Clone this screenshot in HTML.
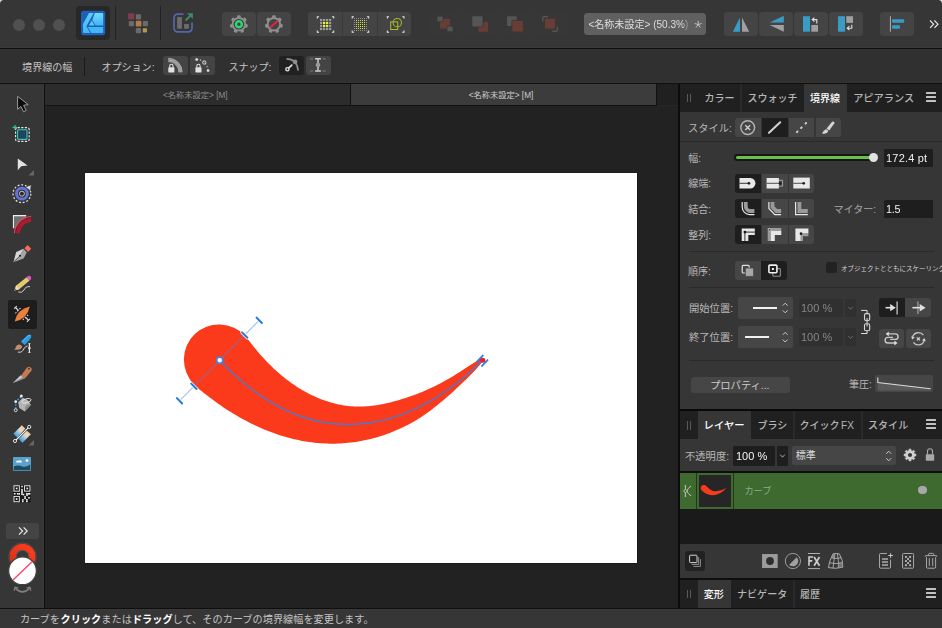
<!DOCTYPE html>
<html lang="ja"><head><meta charset="utf-8"><title>Affinity Designer</title><style>
html,body{margin:0;padding:0;background:#222;}
body{width:942px;height:628px;position:relative;overflow:hidden;font-family:"Liberation Sans",sans-serif;}
div,svg,span{position:absolute;display:block;}
svg{overflow:hidden;}
svg.t{overflow:visible;}
svg.t text{font-family:"Liberation Sans","Noto Sans CJK JP",sans-serif;white-space:pre;}
span.l{line-height:1;white-space:nowrap;will-change:transform;}
</style></head><body>
<main id="canvas" aria-label="Document canvas">
<div style="left:45px;top:106px;width:633px;height:502px;background:#222222;"></div>
<div style="left:84.9px;top:172.8px;width:552.3px;height:390.2px;background:#ffffff;box-shadow:0.2px 0.2px 0 0.55px #171717;"></div>
<svg style="left:85px;top:173px" width="552" height="390" viewBox="85 173 552 390"><title>Curve</title><path d="M245.54,335.96L247.17,338.19L248.8,340.38L250.44,342.54L252.09,344.65L253.73,346.73L255.39,348.76L257.05,350.76L258.71,352.72L260.38,354.64L262.06,356.52L263.74,358.36L265.42,360.17L267.11,361.94L268.8,363.67L270.5,365.36L272.2,367.02L273.9,368.64L275.61,370.23L277.33,371.78L279.04,373.29L280.77,374.76L282.49,376.21L284.22,377.61L285.96,378.98L287.7,380.32L289.44,381.62L291.19,382.89L292.95,384.12L294.71,385.33L296.47,386.49L298.24,387.63L300.01,388.73L301.79,389.79L303.57,390.83L305.36,391.83L307.15,392.8L308.95,393.74L310.75,394.64L312.56,395.51L314.38,396.36L316.2,397.17L318.03,397.94L319.86,398.69L321.7,399.41L323.55,400.09L325.4,400.74L327.26,401.37L329.13,401.96L331.01,402.52L332.89,403.05L334.78,403.55L336.68,404.01L338.58,404.45L340.5,404.84L342.42,405.19L344.35,405.5L346.29,405.77L348.23,405.99L350.18,406.18L352.14,406.33L354.1,406.43L356.07,406.5L358.05,406.54L360.03,406.53L362.01,406.49L364,406.41L366,406.3L367.99,406.15L370,405.97L372.01,405.75L374.02,405.5L376.04,405.22L378.06,404.91L380.09,404.56L382.12,404.19L384.16,403.78L386.2,403.34L388.25,402.88L390.31,402.38L392.37,401.86L394.44,401.31L396.51,400.74L398.59,400.13L400.68,399.51L402.78,398.85L404.88,398.17L407,397.47L409.12,396.75L411.26,396L413.4,395.23L415.56,394.44L417.73,393.63L419.91,392.79L422.09,391.91L424.27,391L426.47,390.06L428.66,389.08L430.87,388.07L433.07,387.03L435.28,385.95L437.5,384.84L439.71,383.7L441.94,382.52L444.16,381.31L446.39,380.07L448.62,378.79L450.86,377.49L453.09,376.15L455.33,374.77L457.57,373.37L459.82,371.93L462.06,370.45L464.31,368.95L466.57,367.42L468.87,365.92L471.23,364.43L473.61,362.93L475.98,361.39L478.33,359.78L480.63,358.09L483.22,360.73L481.4,362.96L479.57,365.17L477.72,367.35L475.86,369.49L473.95,371.57L472,373.59L470.03,375.57L468.05,377.51L466.06,379.43L464.06,381.32L462.07,383.2L460.08,385.08L458.11,386.96L456.15,388.83L454.18,390.68L452.19,392.49L450.2,394.28L448.19,396.05L446.17,397.78L444.14,399.48L442.1,401.17L440.07,402.84L438.03,404.5L435.99,406.15L433.94,407.78L431.88,409.38L429.8,410.96L427.72,412.51L425.62,414.03L423.5,415.51L421.36,416.95L419.2,418.35L417.03,419.7L414.83,421.01L412.61,422.26L410.38,423.48L408.13,424.66L405.88,425.82L403.61,426.94L401.33,428.02L399.03,429.08L396.73,430.1L394.41,431.08L392.08,432.03L389.74,432.95L387.38,433.83L385.02,434.67L382.64,435.48L380.25,436.25L377.85,436.99L375.43,437.69L373.01,438.35L370.57,438.98L368.12,439.56L365.66,440.11L363.19,440.62L360.71,441.1L358.22,441.53L355.71,441.92L353.2,442.28L350.68,442.59L348.14,442.87L345.6,443.1L343.05,443.3L340.49,443.45L337.92,443.56L335.34,443.63L332.75,443.66L330.16,443.64L327.55,443.58L324.94,443.49L322.32,443.34L319.7,443.16L317.07,442.93L314.43,442.66L311.79,442.34L309.14,441.99L306.49,441.58L303.83,441.14L301.17,440.65L298.5,440.11L295.83,439.54L293.15,438.91L290.47,438.25L287.79,437.54L285.11,436.78L282.42,435.98L279.73,435.14L277.04,434.25L274.35,433.32L271.66,432.34L268.97,431.32L266.27,430.25L263.57,429.14L260.88,427.98L258.18,426.78L255.49,425.54L252.79,424.25L250.1,422.91L247.4,421.53L244.71,420.11L242.01,418.64L239.32,417.13L236.63,415.58L233.94,413.98L231.26,412.33L228.57,410.64L225.89,408.91L223.2,407.13L220.52,405.31L217.85,403.44L215.17,401.53L212.5,399.57L209.83,397.57L207.16,395.53L204.5,393.44L201.83,391.31L199.17,389.13L196.52,386.91L193.86,384.64A36.6,35.5 47 0 1 245.54,335.96Z" fill="#fb391b"/><path d="M219.7,360.3C305.27,451.13 401.03,440.55 482.8,360.3" fill="none" stroke="#4a7ad0" stroke-width="1.3"/><path d="M179.5,400.8L259.2,320.3" stroke="#4f88e4" stroke-width="1.2" opacity="0.5"/><path d="M182.16,403.44L176.84,398.16" stroke="#ffffff" stroke-width="3.6" stroke-linecap="round" opacity="0.85"/><path d="M182.16,403.44L176.84,398.16" stroke="#1f78e4" stroke-width="2.0" stroke-linecap="round"/><path d="M196.56,388.94L191.24,383.66" stroke="#ffffff" stroke-width="3.6" stroke-linecap="round" opacity="0.85"/><path d="M196.56,388.94L191.24,383.66" stroke="#1f78e4" stroke-width="2.0" stroke-linecap="round"/><path d="M247.36,337.64L242.04,332.36" stroke="#ffffff" stroke-width="3.6" stroke-linecap="round" opacity="0.85"/><path d="M247.36,337.64L242.04,332.36" stroke="#1f78e4" stroke-width="2.0" stroke-linecap="round"/><path d="M261.86,322.94L256.54,317.66" stroke="#ffffff" stroke-width="3.6" stroke-linecap="round" opacity="0.85"/><path d="M261.86,322.94L256.54,317.66" stroke="#1f78e4" stroke-width="2.0" stroke-linecap="round"/><circle cx="219.7" cy="360.3" r="3.1" fill="#ffffff" stroke="#4a80dc" stroke-width="1.7"/><path d="M477.25,361.34L482.77,355.58" stroke="#2a84e8" stroke-width="1.9" stroke-linecap="round"/><path d="M482,365.89L487.52,360.13" stroke="#2a84e8" stroke-width="1.9" stroke-linecap="round"/><circle cx="482.8" cy="360.3" r="2.5" fill="#ee1c2e"/></svg>
</main>
<header id="toolbar" aria-label="Main toolbar">
<div style="left:0px;top:0px;width:942px;height:48px;background:#363636;"></div>
<div style="left:0px;top:47px;width:942px;height:1px;background:#3b3b3b;"></div>
<div style="left:0px;top:48px;width:942px;height:1px;background:#0e0e0e;"></div>
<div style="left:0px;top:49px;width:942px;height:34px;background:#303030;"></div>
<div style="left:0px;top:82px;width:942px;height:1px;background:#343434;"></div>
<div style="left:0px;top:83px;width:942px;height:1px;background:#0e0e0e;"></div>
<svg style="left:0px;top:0px" width="6" height="6" viewBox="0 0 6 6"><path d="M0,0H3.2A4.2,4.2 0 0 0 0,4.2Z" fill="#dcdcdc"/></svg>
<svg style="left:936px;top:0px" width="6" height="6" viewBox="936 0 6 6"><path d="M942,0H938.8A4.2,4.2 0 0 1 942,4.2Z" fill="#dcdcdc"/></svg>
<div style="left:13px;top:18.5px;width:12px;height:12px;background:#505050;border-radius:6px;"></div>
<div style="left:33px;top:18.5px;width:12px;height:12px;background:#505050;border-radius:6px;"></div>
<div style="left:53px;top:18.5px;width:12px;height:12px;background:#505050;border-radius:6px;"></div>
<div style="left:76px;top:6px;width:34px;height:34px;background:#282828;border-radius:4px;"></div>
<svg style="left:81px;top:10px" width="25" height="26" viewBox="81 10 25 26"><title>Designer Persona</title><defs><linearGradient id="afg" x1="0" y1="0" x2="0" y2="1"><stop offset="0" stop-color="#72dcff"/><stop offset="1" stop-color="#3fb2f4"/></linearGradient><linearGradient id="afh" x1="0" y1="0" x2="0" y2="1"><stop offset="0" stop-color="#5cccfb"/><stop offset="1" stop-color="#45b6f4"/></linearGradient></defs><rect x="81" y="10.7" width="24.2" height="24.5" rx="2.8" fill="#1d60b6"/><path d="M89.05,13H93.7L86.4,26.2L90.2,33.1H84A1,1 0 0 1 83,32.1V23.9Z" fill="url(#afh)"/><path d="M91.7,20.6L94.6,25.6H88.85Z" fill="#5ac8fa"/><path d="M94.75,13H102.2A1,1 0 0 1 103.2,14V25.6H95.55L92.25,19.9Z" fill="url(#afg)"/><path d="M88.25,26.9H103.2V32.1A1,1 0 0 1 102.2,33.1H91.5L87.6,26.9Z" fill="#43b6f5"/></svg>
<div style="left:115px;top:6px;width:1px;height:34px;background:#222222;"></div>
<svg style="left:127px;top:12px" width="23" height="23" viewBox="127 12 23 23"><title>Pixel Persona</title><rect x="128" y="13.3" width="6.2" height="6.2" rx="0.9" fill="#7c3d4c"/><rect x="135.8" y="14.2" width="5.2" height="5.2" rx="0.9" fill="#6a6a6a"/><rect x="128.8" y="21" width="5.2" height="5.2" rx="0.9" fill="#6a6a6a"/><rect x="135.8" y="20.8" width="5.6" height="5.6" rx="0.9" fill="#b47a44"/><rect x="142.8" y="21" width="5.2" height="5.2" rx="0.9" fill="#6a6a6a"/><rect x="135.8" y="28" width="5.2" height="5.2" rx="0.9" fill="#6a6a6a"/><rect x="142.8" y="28.3" width="4.2" height="4.2" rx="0.9" fill="#b09a52"/></svg>
<div style="left:160px;top:6px;width:1px;height:34px;background:#222222;"></div>
<svg style="left:171px;top:11px" width="24" height="24" viewBox="171 11 24 24"><title>Export Persona</title><path d="M182.8,14.05H177.6A3.6,3.6 0 0 0 174,17.65V28.3A3.6,3.6 0 0 0 177.6,31.9H188.4A3.6,3.6 0 0 0 192,28.3V23" fill="none" stroke="#5565ae" stroke-width="1.75" stroke-linecap="round"/><rect x="177.1" y="17" width="4.8" height="11.8" rx="0.5" fill="#6c6c6c"/><rect x="184.1" y="24.1" width="4.8" height="4.7" rx="0.5" fill="#6c6c6c"/><path d="M185.5,20.5L190.6,15.5" fill="none" stroke="#3b8a70" stroke-width="1.8"/><path d="M187.1,13.2H192.9V18.9Z" fill="#3b8a70"/></svg>
<div style="left:222px;top:12px;width:34px;height:24px;background:#444444;border-radius:4px;"></div>
<div style="left:257px;top:12px;width:34px;height:24px;background:#444444;border-radius:4px;"></div>
<svg style="left:228px;top:13px" width="22" height="23" viewBox="228 13 22 23"><title>Preferences</title><rect x="237.15" y="15.2" width="3.5" height="3" rx="1" fill="#8e8e8e" transform="rotate(0 238.9 16.7)"/><rect x="243.01" y="18.02" width="3.5" height="3" rx="1" fill="#8e8e8e" transform="rotate(51.43 244.76 19.52)"/><rect x="244.46" y="24.37" width="3.5" height="3" rx="1" fill="#8e8e8e" transform="rotate(102.86 246.21 25.87)"/><rect x="240.4" y="29.46" width="3.5" height="3" rx="1" fill="#8e8e8e" transform="rotate(154.29 242.15 30.96)"/><rect x="233.9" y="29.46" width="3.5" height="3" rx="1" fill="#8e8e8e" transform="rotate(205.71 235.65 30.96)"/><rect x="229.84" y="24.37" width="3.5" height="3" rx="1" fill="#8e8e8e" transform="rotate(257.14 231.59 25.87)"/><rect x="231.29" y="18.02" width="3.5" height="3" rx="1" fill="#8e8e8e" transform="rotate(308.57 233.04 19.52)"/><circle cx="238.9" cy="24.2" r="6.3" fill="#363636" stroke="#8e8e8e" stroke-width="2"/><circle cx="238.9" cy="24.2" r="3.0" fill="#3c4a42" stroke="#2fd474" stroke-width="2.5"/></svg>
<svg style="left:263px;top:13px" width="22" height="23" viewBox="263 13 22 23"><title>Assistant</title><rect x="272.15" y="15.2" width="3.5" height="3" rx="1" fill="#8e8e8e" transform="rotate(0 273.9 16.7)"/><rect x="278.01" y="18.02" width="3.5" height="3" rx="1" fill="#8e8e8e" transform="rotate(51.43 279.76 19.52)"/><rect x="279.46" y="24.37" width="3.5" height="3" rx="1" fill="#8e8e8e" transform="rotate(102.86 281.21 25.87)"/><rect x="275.4" y="29.46" width="3.5" height="3" rx="1" fill="#8e8e8e" transform="rotate(154.29 277.15 30.96)"/><rect x="268.9" y="29.46" width="3.5" height="3" rx="1" fill="#8e8e8e" transform="rotate(205.71 270.65 30.96)"/><rect x="264.84" y="24.37" width="3.5" height="3" rx="1" fill="#8e8e8e" transform="rotate(257.14 266.59 25.87)"/><rect x="266.29" y="18.02" width="3.5" height="3" rx="1" fill="#8e8e8e" transform="rotate(308.57 268.04 19.52)"/><circle cx="273.9" cy="24.2" r="6.3" fill="#444444" stroke="#8e8e8e" stroke-width="2"/><path d="M270.9,27L276.9,21.4" stroke="#e6203c" stroke-width="2.1" stroke-linecap="round"/></svg>
<div style="left:308px;top:12px;width:103px;height:24px;background:#444444;border-radius:4px;"></div>
<div style="left:342px;top:12px;width:1px;height:24px;background:#3a3a3a;"></div>
<div style="left:377px;top:12px;width:1px;height:24px;background:#3a3a3a;"></div>
<svg style="left:315px;top:14px" width="22" height="22" viewBox="315 14 22 22"><title>Snapping</title><path d="M317.3,18.55V16.8H319.05M331.95,16.8H333.7V18.55M333.7,30.450000000000003V32.2H331.95M319.05,32.2H317.3V30.450000000000003" fill="none" stroke="#e6e6e6" stroke-width="1.05"/><rect x="320" y="18.9" width="2.2" height="2.2" fill="#9a9a9a"/><rect x="320" y="21.9" width="2.2" height="2.2" fill="#9a9a9a"/><rect x="320" y="24.9" width="2.2" height="2.2" fill="#9a9a9a"/><rect x="320" y="27.9" width="2.2" height="2.2" fill="#9a9a9a"/><rect x="323" y="18.9" width="2.2" height="2.2" fill="#9a9a9a"/><rect x="323" y="21.9" width="2.2" height="2.2" fill="#e9f03c"/><rect x="323" y="24.9" width="2.2" height="2.2" fill="#e9f03c"/><rect x="323" y="27.9" width="2.2" height="2.2" fill="#9a9a9a"/><rect x="326" y="18.9" width="2.2" height="2.2" fill="#9a9a9a"/><rect x="326" y="21.9" width="2.2" height="2.2" fill="#e9f03c"/><rect x="326" y="24.9" width="2.2" height="2.2" fill="#e9f03c"/><rect x="326" y="27.9" width="2.2" height="2.2" fill="#9a9a9a"/><rect x="329" y="18.9" width="2.2" height="2.2" fill="#9a9a9a"/><rect x="329" y="21.9" width="2.2" height="2.2" fill="#9a9a9a"/><rect x="329" y="24.9" width="2.2" height="2.2" fill="#9a9a9a"/><rect x="329" y="27.9" width="2.2" height="2.2" fill="#9a9a9a"/></svg>
<svg style="left:350px;top:14px" width="22" height="22" viewBox="350 14 22 22"><title>Grid</title><path d="M352.2,18.45V16.7H353.95M366.95,16.7H368.7V18.45M368.7,30.549999999999997V32.3H366.95M353.95,32.3H352.2V30.549999999999997" fill="none" stroke="#e6e6e6" stroke-width="1.05"/><rect x="354" y="18" width="1" height="1" fill="#8e8e8e"/><rect x="354" y="20" width="1" height="1" fill="#8e8e8e"/><rect x="354" y="22" width="1" height="1" fill="#8e8e8e"/><rect x="354" y="24" width="1" height="1" fill="#8e8e8e"/><rect x="354" y="26" width="1" height="1" fill="#8e8e8e"/><rect x="354" y="28" width="1" height="1" fill="#8e8e8e"/><rect x="354" y="30" width="1" height="1" fill="#8e8e8e"/><rect x="356" y="18" width="1" height="1" fill="#8e8e8e"/><rect x="356" y="20" width="1" height="1" fill="#d0e038"/><rect x="356" y="22" width="1" height="1" fill="#d0e038"/><rect x="356" y="24" width="1" height="1" fill="#d0e038"/><rect x="356" y="26" width="1" height="1" fill="#d0e038"/><rect x="356" y="28" width="1" height="1" fill="#d0e038"/><rect x="356" y="30" width="1" height="1" fill="#8e8e8e"/><rect x="358" y="18" width="1" height="1" fill="#8e8e8e"/><rect x="358" y="20" width="1" height="1" fill="#d0e038"/><rect x="358" y="22" width="1" height="1" fill="#d0e038"/><rect x="358" y="24" width="1" height="1" fill="#d0e038"/><rect x="358" y="26" width="1" height="1" fill="#d0e038"/><rect x="358" y="28" width="1" height="1" fill="#d0e038"/><rect x="358" y="30" width="1" height="1" fill="#8e8e8e"/><rect x="360" y="18" width="1" height="1" fill="#8e8e8e"/><rect x="360" y="20" width="1" height="1" fill="#d0e038"/><rect x="360" y="22" width="1" height="1" fill="#d0e038"/><rect x="360" y="24" width="1" height="1" fill="#d0e038"/><rect x="360" y="26" width="1" height="1" fill="#d0e038"/><rect x="360" y="28" width="1" height="1" fill="#d0e038"/><rect x="360" y="30" width="1" height="1" fill="#8e8e8e"/><rect x="362" y="18" width="1" height="1" fill="#8e8e8e"/><rect x="362" y="20" width="1" height="1" fill="#d0e038"/><rect x="362" y="22" width="1" height="1" fill="#d0e038"/><rect x="362" y="24" width="1" height="1" fill="#d0e038"/><rect x="362" y="26" width="1" height="1" fill="#d0e038"/><rect x="362" y="28" width="1" height="1" fill="#d0e038"/><rect x="362" y="30" width="1" height="1" fill="#8e8e8e"/><rect x="364" y="18" width="1" height="1" fill="#8e8e8e"/><rect x="364" y="20" width="1" height="1" fill="#d0e038"/><rect x="364" y="22" width="1" height="1" fill="#d0e038"/><rect x="364" y="24" width="1" height="1" fill="#d0e038"/><rect x="364" y="26" width="1" height="1" fill="#d0e038"/><rect x="364" y="28" width="1" height="1" fill="#d0e038"/><rect x="364" y="30" width="1" height="1" fill="#8e8e8e"/><rect x="366" y="18" width="1" height="1" fill="#8e8e8e"/><rect x="366" y="20" width="1" height="1" fill="#8e8e8e"/><rect x="366" y="22" width="1" height="1" fill="#8e8e8e"/><rect x="366" y="24" width="1" height="1" fill="#8e8e8e"/><rect x="366" y="26" width="1" height="1" fill="#8e8e8e"/><rect x="366" y="28" width="1" height="1" fill="#8e8e8e"/><rect x="366" y="30" width="1" height="1" fill="#8e8e8e"/></svg>
<svg style="left:385px;top:14px" width="22" height="22" viewBox="385 14 22 22"><title>Boolean snapping</title><path d="M387.3,18.55V16.8H389.05M402.25,16.8H404V18.55M404,30.450000000000003V32.2H402.25M389.05,32.2H387.3V30.450000000000003" fill="none" stroke="#e6e6e6" stroke-width="1.05"/><rect x="390.7" y="21.9" width="7" height="7.6" fill="none" stroke="#a9b92e" stroke-width="1.05"/><circle cx="397.3" cy="22.7" r="4.2" fill="none" stroke="#a9b92e" stroke-width="1.05"/></svg>
<div style="left:428px;top:12px;width:34px;height:24px;background:#373737;border-radius:4px;"></div>
<div style="left:463px;top:12px;width:34px;height:24px;background:#373737;border-radius:4px;"></div>
<div style="left:498px;top:12px;width:34px;height:24px;background:#373737;border-radius:4px;"></div>
<div style="left:533px;top:12px;width:34px;height:24px;background:#373737;border-radius:4px;"></div>
<svg style="left:435px;top:14px" width="22" height="22" viewBox="435 14 22 22"><title>Add</title><rect x="440" y="18.8" width="10" height="10" rx="0.7" fill="#673d35"/><rect x="437" y="16.2" width="6" height="5.5" rx="0.7" fill="#555555" stroke="#363636" stroke-width="0.7"/><rect x="447" y="26.2" width="6" height="5.5" rx="0.7" fill="#555555" stroke="#363636" stroke-width="0.7"/></svg>
<svg style="left:470px;top:14px" width="22" height="22" viewBox="470 14 22 22"><title>Subtract</title><rect x="478.3" y="22" width="9.7" height="9.7" rx="0.7" fill="#673d35"/><rect x="471.8" y="15.8" width="11.2" height="11.2" rx="0.9" fill="#555555" stroke="#363636" stroke-width="0.8"/></svg>
<svg style="left:505px;top:14px" width="22" height="22" viewBox="505 14 22 22"><title>Intersect</title><rect x="507" y="16.2" width="9.7" height="9.7" rx="0.7" fill="#555555"/><rect x="511.8" y="20.4" width="11.6" height="11.6" rx="0.9" fill="#673d35" stroke="#363636" stroke-width="0.8"/></svg>
<svg style="left:540px;top:14px" width="22" height="22" viewBox="540 14 22 22"><title>Xor</title><path d="M542.8,21.6V17.8A1,1 0 0 1 543.8,16.8H548M557.4,26.4V30.2A1,1 0 0 1 556.4,31.2H552.2" fill="none" stroke="#555555" stroke-width="1.4"/><rect x="545" y="18.8" width="10" height="10" rx="0.7" fill="#673d35"/></svg>
<div style="left:584px;top:13px;width:122.2px;height:21.9px;background:#606060;border-radius:3.5px;"></div>
<svg class="t" style="left:588px;top:18px;fill:#dedede;overflow:hidden;-webkit-mask-image:linear-gradient(90deg,#000 94px,transparent 103px);mask-image:linear-gradient(90deg,#000 94px,transparent 103px)" width="103" height="13"><title>&lt;名称未設定&gt; (50.3%)</title><text x="0.4" y="9.72" font-size="10.05">&lt;名称未設定&gt; (50.3%)</text></svg>
<svg style="left:693px;top:19px" width="11" height="11" viewBox="693 19 11 11"><title>modified</title><path d="M698.2,24.6L698.2,20.9M698.2,24.6L701.72,23.46M698.2,24.6L700.37,27.59M698.2,24.6L696.03,27.59M698.2,24.6L694.68,23.46" stroke="#c4c4c4" stroke-width="0.95" fill="none"/></svg>
<div style="left:724px;top:12px;width:34px;height:24px;background:#444444;border-radius:4px;"></div>
<div style="left:759px;top:12px;width:34px;height:24px;background:#444444;border-radius:4px;"></div>
<div style="left:794px;top:12px;width:34px;height:24px;background:#444444;border-radius:4px;"></div>
<div style="left:829px;top:12px;width:34px;height:24px;background:#444444;border-radius:4px;"></div>
<svg style="left:730px;top:14px" width="22" height="22" viewBox="730 14 22 22"><title>Flip Horizontal</title><path d="M732.8,31.7L740,17.5V31.7Z" fill="#3a9bc4"/><path d="M742,17.5L749.2,31.7H742Z" fill="#a0a0a0"/></svg>
<svg style="left:765px;top:14px" width="22" height="22" viewBox="765 14 22 22"><title>Flip Vertical</title><path d="M769.6,22.4L783.8,15.8V22.4Z" fill="#3a9bc4"/><path d="M769.6,25L783.8,31.7V25Z" fill="#a0a0a0"/></svg>
<svg style="left:800px;top:14px" width="22" height="22" viewBox="800 14 22 22"><title>Rotate CCW</title><rect x="803" y="16.2" width="7" height="15.5" fill="#3a9bc4"/><rect x="811.3" y="25" width="6.7" height="6.7" fill="#a0a0a0"/><path d="M816.8,23.4V19.6H812.6M814.4,17.6L812.2,19.6L814.4,21.6" fill="none" stroke="#e0e0e0" stroke-width="1.1"/></svg>
<svg style="left:835px;top:14px" width="22" height="22" viewBox="835 14 22 22"><title>Rotate CW</title><rect x="838" y="16.2" width="7" height="15.5" fill="#3a9bc4"/><rect x="846.3" y="16.2" width="6.7" height="6.7" fill="#a0a0a0"/><path d="M851.8,24.8V28.2H847.4M849.4,26.2L847.2,28.2L849.4,30.2" fill="none" stroke="#e0e0e0" stroke-width="1.1"/></svg>
<div style="left:880px;top:12px;width:34px;height:24px;background:#444444;border-radius:4px;"></div>
<svg style="left:886px;top:14px" width="22" height="22" viewBox="886 14 22 22"><title>Align</title><rect x="889.9" y="16.2" width="1" height="15.5" fill="#b0b0b0"/><rect x="892" y="19.2" width="12.2" height="3.6" rx="1" fill="#3a9bc4"/><rect x="892" y="25.2" width="8" height="3.5" rx="1" fill="#3a9bc4"/></svg>
<svg style="left:928px;top:18px" width="12" height="12" viewBox="928 18 12 12"><title>More</title><path d="M930,20.5L933.6,24.2L930,27.9M934.4,20.5L938,24.2L934.4,27.9" fill="none" stroke="#e6e6e6" stroke-width="1.2"/></svg>
</header>
<section id="context-toolbar" aria-label="Context toolbar">
<svg class="t" style="left:22px;top:61px;fill:#c4c4c4" width="51" height="13"><title>境界線の幅</title><text x="0.1" y="9.82" font-size="10.05">境界線の幅</text></svg>
<div style="left:84px;top:57px;width:1px;height:19px;background:#1a1a1a;"></div>
<svg class="t" style="left:101px;top:61px;fill:#c4c4c4" width="54" height="13"><title>オプション:</title><text x="0.4" y="9.82" font-size="10.05">オプション:</text></svg>
<div style="left:163px;top:56px;width:25px;height:19px;background:#444444;border-radius:3px;"></div>
<div style="left:190px;top:56px;width:25px;height:19px;background:#444444;border-radius:3px;"></div>
<svg style="left:163px;top:56px" width="25" height="19" viewBox="163 56 25 19"><title>Lock curvature</title><path d="M168.3,59.9A12.2,12.2 0 0 1 180.5,72.3" fill="none" stroke="#8e8e8e" stroke-width="3.4"/><path d="M168.3,58.2A13.9,13.9 0 0 1 182.2,72.3M168.3,59.9A12.2,12.2 0 0 1 180.5,72.3M168.3,61.6A10.5,10.5 0 0 1 178.8,72.3" fill="none" stroke="#c4c4c4" stroke-width="0.6"/><rect x="168.3" y="67.3" width="6.1" height="5.1" rx="0.6" fill="#e2e2e2"/><path d="M169.75,67.6V65.8A1.6,1.6 0 0 1 172.95,65.8V67.6" fill="none" stroke="#e2e2e2" stroke-width="1.1"/><circle cx="171.35" cy="66.4" r="0.55" fill="#2a2a2a"/></svg>
<svg style="left:190px;top:56px" width="25" height="19" viewBox="190 56 25 19"><title>Lock handles</title><path d="M196.6,59.5Q206.4,59.6 208.1,70.5" fill="none" stroke="#bcbcbc" stroke-width="1.1" stroke-dasharray="1.5 1.7"/><rect x="195.4" y="58.3" width="2.5" height="2.4" rx="0.7" fill="#e2e2e2"/><circle cx="204.3" cy="62.5" r="1.7" fill="#6a6a6a" stroke="#d0d0d0" stroke-width="1"/><rect x="206.8" y="69.4" width="2.6" height="2.3" rx="0.8" fill="#e2e2e2"/><rect x="195.4" y="67.3" width="6.1" height="5.1" rx="0.6" fill="#e2e2e2"/><path d="M196.85,67.6V65.8A1.6,1.6 0 0 1 200.05,65.8V67.6" fill="none" stroke="#e2e2e2" stroke-width="1.1"/><circle cx="198.45" cy="66.4" r="0.55" fill="#2a2a2a"/></svg>
<svg class="t" style="left:228px;top:61px;fill:#c4c4c4" width="44" height="13"><title>スナップ:</title><text x="0.4" y="9.82" font-size="10.05">スナップ:</text></svg>
<div style="left:279px;top:56px;width:25px;height:19px;background:#212121;border-radius:3px;"></div>
<div style="left:305.5px;top:56px;width:25.5px;height:19px;background:#444444;border-radius:3px;"></div>
<svg style="left:279px;top:56px" width="25" height="19" viewBox="279 56 25 19"><title>Snap to geometry</title><path d="M286.5,58.9Q297,59 298.1,70.6" fill="none" stroke="#8a8a8a" stroke-width="1.7"/><circle cx="295.1" cy="61.9" r="2.3" fill="#8e8e8e"/><path d="M288.6,68.1L291.8,65.1" stroke="#e0e0e0" stroke-width="1.7" stroke-linecap="round"/><circle cx="287.4" cy="69.3" r="1.6" fill="#2a2a2a" stroke="#e4e4e4" stroke-width="1.3"/></svg>
<svg style="left:305px;top:56px" width="26" height="19" viewBox="305 56 26 19"><title>Snap all layers</title><path d="M310,58.9H313.2M322.6,58.9H325.8M310,71H313.2M322.6,71H325.8" stroke="#7a7a7a" stroke-width="1"/><path d="M315.1,58.8H320.9M315.1,71H320.9" stroke="#d0d0d0" stroke-width="1.5"/><path d="M318,58.8V71" stroke="#c4c4c4" stroke-width="1.6"/><circle cx="318" cy="65" r="2.3" fill="#9a9a9a"/></svg>
</section>
<nav id="document-tabs" aria-label="Document tabs">
<div style="left:45px;top:84px;width:633px;height:21px;background:#202020;"></div>
<div style="left:45px;top:84px;width:305px;height:21px;background:#2c2c2c;"></div>
<div style="left:350px;top:84px;width:1px;height:21px;background:#0f0f0f;"></div>
<div style="left:351px;top:84px;width:305px;height:21px;background:#3c3c3c;"></div>
<div style="left:351px;top:84px;width:305px;height:1px;background:#404040;"></div>
<div style="left:45px;top:105px;width:612px;height:1px;background:#121212;"></div>
<div style="left:656px;top:84px;width:1px;height:22px;background:#121212;"></div>
<div style="left:657px;top:105px;width:21px;height:1px;background:#262626;"></div>
<svg class="t" style="left:162px;top:90px;fill:#8c8c8c" width="70" height="11"><title>&lt;名称未設定&gt; [M]</title><text x="1" y="8.13" font-size="8.25">&lt;名称未設定&gt; [M]</text></svg>
<svg class="t" style="left:468px;top:90px;fill:#cdcdcd" width="70" height="11"><title>&lt;名称未設定&gt; [M]</title><text x="0.7" y="8.13" font-size="8.25">&lt;名称未設定&gt; [M]</text></svg>
</nav>
<nav id="tools" aria-label="Tools panel">
<div style="left:0px;top:84px;width:44px;height:524px;background:#363636;"></div>
<div style="left:43px;top:84px;width:1px;height:524px;background:#3a3a3a;"></div>
<div style="left:44px;top:84px;width:1px;height:524px;background:#0e0e0e;"></div>
<svg style="left:14px;top:93px" width="18" height="22" viewBox="14 93 18 22"><title>Move Tool</title><path d="M17.6,96.3V109.3L20.9,106.4L23.6,111.8L26.2,110.5L23.6,105.3L28.2,104.6Z" fill="#0c0c0c" stroke="#9a9a9a" stroke-width="1" stroke-linejoin="round"/></svg>
<svg style="left:11px;top:123px" width="22" height="22" viewBox="11 123 22 22"><title>Artboard Tool</title><rect x="15.6" y="127.6" width="13.6" height="13.8" rx="2" fill="none" stroke="#e8e8e8" stroke-width="1.1" stroke-dasharray="2.2 1.4"/><rect x="17.6" y="129.8" width="9.4" height="9.6" rx="0.8" fill="#1d4562" stroke="#3cc4aa" stroke-width="1.1"/><path d="M12.6,127.4H17.4M15,125V129.8" stroke="#3cc4aa" stroke-width="1.2"/></svg>
<svg style="left:14px;top:155px" width="22" height="22" viewBox="14 155 22 22"><title>Node Tool</title><path d="M17.8,158.4L27.6,165.4L21.2,166.2L17.8,170.2Z" fill="#e2e2e2"/><path d="M28.4,175.6L34,170V175.6Z" fill="#666"/></svg>
<svg style="left:11px;top:183px" width="22" height="22" viewBox="11 183 22 22"><title>Point Transform Tool</title><circle cx="21.9" cy="193.7" r="8.9" fill="none" stroke="#e4e4e4" stroke-width="1.25" stroke-dasharray="1.9 1.83"/><circle cx="21.9" cy="193.7" r="5.4" fill="#303030" stroke="#6074dc" stroke-width="3"/><circle cx="21.9" cy="193.7" r="2.5" fill="#2a2a2a" stroke="#c8c8c8" stroke-width="1"/><path d="M25.4,187.1L31.2,184.9L30.4,190.8Z" fill="#dadada" stroke="#363636" stroke-width="0.5"/></svg>
<svg style="left:12px;top:214px" width="21" height="20" viewBox="12 214 21 20"><title>Corner Tool</title><path d="M13.4,215.6H26.2V228.2H13.4Z" fill="#707070"/><path d="M13.45,228.2V215.65H26.2" fill="none" stroke="#ededed" stroke-width="1.1"/><circle cx="31.1" cy="233.2" r="13.2" fill="#363636"/><path d="M31.1,220.1A13.1,13.1 0 0 0 18,233.2" fill="none" stroke="#a81c30" stroke-width="4.5"/><path d="M31.1,217.6A15.6,15.6 0 0 0 15.5,233.2" fill="none" stroke="#6e0f1e" stroke-width="0.7"/><path d="M31.1,216.6A16.6,16.6 0 0 0 14.5,233.2" fill="none" stroke="#f04a68" stroke-width="1"/></svg>
<svg style="left:12px;top:244px" width="21" height="20" viewBox="12 244 21 20"><title>Pen Tool</title><path d="M13.4,262.2L16.2,252L23.6,248.8L20,255.9Z" fill="#d6d6d6"/><path d="M13.4,262.2L20,255.9L23.6,248.8L26.8,252.5L23.6,258.5Z" fill="#a6a6a6"/><path d="M13.6,262L19.6,256.2" stroke="#4a4a4a" stroke-width="0.8"/><circle cx="20" cy="255.8" r="1.05" fill="#1e1e1e"/><path d="M27.7,245.1L31.1,248.8L28.2,252L24.5,248.3Z" fill="#fc6a58"/></svg>
<svg style="left:12px;top:274px" width="21" height="21" viewBox="12 274 21 21"><title>Pencil Tool</title><path d="M14.4,290.6L16.2,285.6L26.6,277.2L29.6,280.6L19.2,289.2Z" fill="#e2ca6e"/><path d="M14.4,290.6L16.2,285.6L19.2,289.2Z" fill="#f0e0b8"/><path d="M14.4,290.6L15.2,288.4L16.4,289.8Z" fill="#555"/><path d="M26.6,277.2L28,276A2.2,2.2 0 0 1 30.8,279.2L29.6,280.6Z" fill="#ee4fd4"/><path d="M18.4,292Q22,293.4 24,290Q25.6,286.2 30,286.6" fill="none" stroke="#e0e0e0" stroke-width="0.9"/></svg>
<div style="left:8.2px;top:300.2px;width:28.7px;height:28.4px;background:#1d1d1d;border-radius:2.5px;"></div>
<svg style="left:8px;top:300px" width="29" height="29" viewBox="8 300 29 29"><title>Stroke Width Tool</title><path d="M14.66,321.55Q17.3,309 29.82,306.4Q27.2,318.9 14.66,321.55Z" fill="#ea803a"/><path d="M15.4,313.4L21.2,307.4M22.8,319.9L28.2,314.8" stroke="#e0e0e0" stroke-width="1.1" stroke-dasharray="1.5 1.4"/><path d="M18.2,310.2L15.5,307.5M25.6,317.5L28.2,319.9" stroke="#dcdcdc" stroke-width="1.25"/><path d="M14.1,308.6L16.8,306.1M26.9,321.8L29.8,318.9" stroke="#dcdcdc" stroke-width="1.2"/></svg>
<svg style="left:12px;top:333px" width="21" height="22" viewBox="12 333 21 22"><title>Vector Brush Tool</title><path d="M20.9,341.8L27.7,335.3Q29.6,334.4 30.8,334.8Q31.6,335.6 31.1,337.2L29.6,340L24.7,344.9Z" fill="#2a9dea"/><path d="M22,341.4L28,335.8Q29.4,335.2 30.2,335.4" fill="none" stroke="#6cc4f8" stroke-width="0.8"/><path d="M14.1,349.7Q15.6,348.6 16,346.4Q17,344.6 19,344.4Q21.4,344.4 22.1,346.4Q22.2,348 20.6,348.9Q17.6,350.2 14.1,349.7Z" fill="#c48c70"/><path d="M17.9,352.1Q20.4,352.6 21.8,351.6Q23.2,350.4 24.4,348Q25.6,346 27.6,346" fill="none" stroke="#e0e0e0" stroke-width="0.9"/><path d="M29.4,343.6V352.6" stroke="#e8e8e8" stroke-width="1.2"/><path d="M28.4,343.6H30.4M28.4,352.5H30.4" stroke="#e8e8e8" stroke-width="0.9"/><circle cx="29.4" cy="348" r="1.3" fill="#e8e8e8"/></svg>
<svg style="left:12px;top:364px" width="21" height="20" viewBox="12 364 21 20"><title>Knife Tool</title><path d="M20.8,376L27,367.4A2.9,2.9 0 0 1 31.6,370.6L24.8,378.8Z" fill="#c27a52"/><circle cx="28.9" cy="368.7" r="0.9" fill="#363636"/><path d="M12.8,382.9L20.6,375.2L24.2,378.6Z" fill="#c8c8c8"/><path d="M12.8,382.9L24.2,378.6L22.8,377.2Z" fill="#8a8a8a"/></svg>
<svg style="left:12px;top:394px" width="22" height="20" viewBox="12 394 22 20"><title>Fill Tool</title><path d="M18.2,402.3L22.8,397.7L27.9,400.2L30.9,404.8L24.8,411.4L19.2,407.9Z" fill="#b4b4b4"/><path d="M27.4,404.4L30.9,404.8L24.8,411.4L25.2,406.8Z" fill="#8c8c8c"/><ellipse cx="26.4" cy="400.8" rx="4.7" ry="1.9" transform="rotate(-14 26.4 400.8)" fill="none" stroke="#e6e6e6" stroke-width="0.9"/><path d="M15.7,409V402L21,396.6" fill="none" stroke="#2a8fe0" stroke-width="1.5" stroke-dasharray="2 1.2"/><circle cx="15.7" cy="410.2" r="1.5" fill="#363636" stroke="#e8e8e8" stroke-width="0.9"/><circle cx="15.7" cy="401.7" r="1.4" fill="#e8e8e8"/><circle cx="21.3" cy="396.1" r="1.5" fill="#e8e8e8"/></svg>
<svg style="left:12px;top:424px" width="23" height="22" viewBox="12 424 23 22"><title>Transparency Tool</title><defs><linearGradient id="trg" gradientUnits="userSpaceOnUse" x1="28" y1="428" x2="17" y2="440"><stop offset="0" stop-color="#f0c694"/><stop offset="0.42" stop-color="#ecd8c0"/><stop offset="0.55" stop-color="#a8d0e8"/><stop offset="1" stop-color="#2484c8"/></linearGradient></defs><path d="M21.8,425.2L25.3,428.7L17.2,437.4L13.3,433.8Z" fill="url(#trg)"/><path d="M26.9,430.8L30.9,434.3L22.3,443L18.7,438.9Z" fill="url(#trg)"/><path d="M16,440L28.2,427.9" stroke="#f0f0f0" stroke-width="1.1"/><circle cx="15" cy="441" r="1.6" fill="#363636" stroke="#f0f0f0" stroke-width="0.9"/><circle cx="29.2" cy="426.9" r="1.6" fill="#363636" stroke="#f0f0f0" stroke-width="0.9"/><path d="M28.4,445.6L34,440V445.6Z" fill="#666"/></svg>
<svg style="left:13px;top:457px" width="18" height="14" viewBox="13 457 18 14"><title>Place Image Tool</title><rect x="13" y="457" width="18" height="13.8" rx="0.8" fill="#5aa2cc"/><path d="M13.8,466.6Q17.6,464.4 21.6,466.2T30.2,464.6V470H13.8Z" fill="#1c4a5e"/><circle cx="27" cy="460.6" r="1.4" fill="#f4f4f4"/><path d="M16.2,462.6A1.6,1.6 0 0 1 18.6,460.8A1.8,1.8 0 0 1 21.6,461.4A1,1 0 0 1 22,462.6Z" fill="#f4f4f4"/></svg>
<svg style="left:13px;top:485px" width="18" height="18" viewBox="13 485 18 18"><title>QR Code Tool</title><rect x="13.299999999999999" y="485.09999999999997" width="17.32" height="17.32" rx="0.6" fill="#181818"/><rect x="13.95" y="485.75" width="5.38" height="5.38" fill="none" stroke="#f4f4f4" stroke-width="0.9"/><rect x="15.8" y="487.6" width="1.67" height="1.67" fill="#f4f4f4"/><rect x="24.59" y="485.75" width="5.38" height="5.38" fill="none" stroke="#f4f4f4" stroke-width="0.9"/><rect x="26.44" y="487.6" width="1.67" height="1.67" fill="#f4f4f4"/><rect x="13.95" y="496.39" width="5.38" height="5.38" fill="none" stroke="#f4f4f4" stroke-width="0.9"/><rect x="15.8" y="498.24" width="1.67" height="1.67" fill="#f4f4f4"/><rect x="21.2" y="485.7" width="1.6" height="1.6" fill="#f0f0f0"/><rect x="21.2" y="488.9" width="1.6" height="1.6" fill="#f0f0f0"/><rect x="21.2" y="490.42" width="1.6" height="1.6" fill="#f0f0f0"/><rect x="21.2" y="491.94" width="1.6" height="1.6" fill="#f0f0f0"/><rect x="21.2" y="493.46" width="1.6" height="1.6" fill="#f0f0f0"/><rect x="22.72" y="493.76" width="1.6" height="1.6" fill="#f0f0f0"/><rect x="13.9" y="493" width="1.6" height="1.6" fill="#f0f0f0"/><rect x="16.94" y="493" width="1.6" height="1.6" fill="#f0f0f0"/><rect x="18.46" y="493" width="1.6" height="1.6" fill="#f0f0f0"/><rect x="26.06" y="493" width="1.6" height="1.6" fill="#f0f0f0"/><rect x="27.58" y="493" width="1.6" height="1.6" fill="#f0f0f0"/><rect x="28.8" y="493" width="1.6" height="1.6" fill="#f0f0f0"/><rect x="26.22" y="494.37" width="1.6" height="1.6" fill="#f0f0f0"/><rect x="24.24" y="496.04" width="1.6" height="1.6" fill="#f0f0f0"/><rect x="24.24" y="497.56" width="1.6" height="1.6" fill="#f0f0f0"/><rect x="28.19" y="496.95" width="1.6" height="1.6" fill="#f0f0f0"/><rect x="21.96" y="499.08" width="1.6" height="1.6" fill="#f0f0f0"/><rect x="21.96" y="500.6" width="1.6" height="1.6" fill="#f0f0f0"/><rect x="26.06" y="499.08" width="1.6" height="1.6" fill="#f0f0f0"/><rect x="26.06" y="500.6" width="1.6" height="1.6" fill="#f0f0f0"/></svg>
<div style="left:6px;top:523px;width:33px;height:15.5px;background:#444444;border-radius:2.5px;"></div>
<svg style="left:17px;top:525px" width="12" height="12" viewBox="17 525 12 12"><title>More tools</title><path d="M19,527.4L22.6,531L19,534.6M23.6,527.4L27.2,531L23.6,534.6" fill="none" stroke="#e8e8e8" stroke-width="1.2"/></svg>
<svg style="left:6px;top:541px" width="33" height="55" viewBox="6 541 33 55"><title>Colours</title><defs><linearGradient id="rg" x1="1" y1="0" x2="0" y2="1"><stop offset="0" stop-color="#ff3c1c"/><stop offset="1" stop-color="#d8301a"/></linearGradient></defs><circle cx="22.5" cy="556.6" r="13.7" fill="#2c2c2c" stroke="#5a5a5a" stroke-width="0.8"/><circle cx="22.5" cy="556.6" r="9.8" fill="none" stroke="url(#rg)" stroke-width="6.3"/><circle cx="22.5" cy="556.6" r="6.3" fill="#383838" stroke="#666" stroke-width="0.8"/><circle cx="22.5" cy="570.8" r="13.9" fill="#ffffff" stroke="#414141" stroke-width="1.3"/><clipPath id="wcl"><circle cx="22.5" cy="570.8" r="13.2"/></clipPath><path d="M12,581L33,560.8" stroke="#ff4466" stroke-width="1.4" clip-path="url(#wcl)"/><path d="M15.4,588.2Q22.5,595.6 29.6,588.2" fill="none" stroke="#808080" stroke-width="1.6"/><path d="M14.2,590.6L15,587.2L18.4,588.2M30.8,590.6L30,587.2L26.6,588.2" fill="none" stroke="#808080" stroke-width="1.3"/></svg>
</nav>
<aside id="stroke-panel" aria-label="Stroke panel">
<div style="left:678px;top:84px;width:2px;height:524px;background:#0c0c0c;"></div>
<div style="left:680px;top:84px;width:262px;height:28px;background:#202020;"></div>
<div style="left:740px;top:84px;width:1.6px;height:28px;background:#2a2a2a;"></div>
<div style="left:804px;top:84px;width:43px;height:28px;background:#363636;"></div>
<div style="left:680px;top:112px;width:262px;height:296.8px;background:#363636;"></div>
<div style="left:687px;top:94px;width:1px;height:8.2px;background:#585858;"></div>
<div style="left:690.2px;top:94px;width:1px;height:8.2px;background:#585858;"></div>
<svg class="t" style="left:704px;top:92px;fill:#b6b6b6" width="31" height="14"><title>カラー</title><text x="0.4" y="10.22" font-size="10.05" font-weight="500">カラー</text></svg>
<svg class="t" style="left:747px;top:92px;fill:#b6b6b6" width="51" height="14"><title>スウォッチ</title><text x="0.4" y="10.22" font-size="10.05" font-weight="500">スウォッチ</text></svg>
<svg class="t" style="left:809px;top:92px;fill:#ffffff" width="32" height="14"><title>境界線</title><text x="1" y="10.02" font-size="10.05" font-weight="500">境界線</text></svg>
<svg class="t" style="left:853px;top:92px;fill:#b6b6b6" width="62" height="14"><title>アピアランス</title><text x="0.2" y="10.28" font-size="10.2" font-weight="500">アピアランス</text></svg>
<div style="left:926px;top:92px;width:10.4px;height:2px;background:#c2c2c2;border-radius:0.5px;"></div>
<div style="left:926px;top:96px;width:10.4px;height:2px;background:#c2c2c2;border-radius:0.5px;"></div>
<div style="left:926px;top:100px;width:10.4px;height:2px;background:#c2c2c2;border-radius:0.5px;"></div>
<svg class="t" style="left:687px;top:122px;fill:#b6b6b6" width="45" height="14"><title>スタイル:</title><text x="0.9" y="10.19" font-size="10.25">スタイル:</text></svg>
<div style="left:735.2px;top:118px;width:25.6px;height:19px;background:#464646;border-radius:3px 0 0 3px;"></div>
<div style="left:762px;top:118px;width:25.6px;height:19px;background:#1e1e1e;border-radius:0;"></div>
<div style="left:788.8px;top:118px;width:25.6px;height:19px;background:#464646;border-radius:0;"></div>
<div style="left:815.6px;top:118px;width:25.6px;height:19px;background:#464646;border-radius:0 3px 3px 0;"></div>
<svg style="left:735px;top:118px" width="27" height="19" viewBox="735 118 27 19"><title>None</title><circle cx="747.7" cy="127.6" r="6.9" fill="none" stroke="#b4b4b4" stroke-width="1.4"/><path d="M745.3,125.2L750.1,130M750.1,125.2L745.3,130" stroke="#d4d4d4" stroke-width="1.3"/></svg>
<svg style="left:761px;top:118px" width="27" height="19" viewBox="761 118 27 19"><title>Solid</title><path d="M769,132.8L780.2,122.3" stroke="#d0d0d0" stroke-width="2.1" stroke-linecap="round"/></svg>
<svg style="left:788px;top:118px" width="27" height="19" viewBox="788 118 27 19"><title>Dash</title><path d="M796.9,132.1L797.5,131.5M801.1,128L801.7,127.4M805.5,123.6L806.1,123" stroke="#d0d0d0" stroke-width="2" stroke-linecap="round"/></svg>
<svg style="left:815px;top:118px" width="27" height="19" viewBox="815 118 27 19"><title>Texture</title><path d="M826.6,128.6L831.9,122A1.45,1.45 0 0 1 834.3,123.6L829.2,130.6Z" fill="#d4d4d4"/><path d="M822,133.4Q823.4,130.4 825.4,129.4Q827.6,129 828.2,131Q827.6,133 825.4,133.6Q823.6,134 822,133.4Z" fill="#d4d4d4"/></svg>
<div style="left:680px;top:141px;width:262px;height:1px;background:#2a2a2a;"></div>
<svg class="t" style="left:688px;top:152px;fill:#b6b6b6" width="14" height="13"><title>幅:</title><text x="0.2" y="9.82" font-size="10.05">幅:</text></svg>
<div style="left:734.2px;top:154.4px;width:139px;height:6.4px;background:#161616;border-radius:3.2px;"></div>
<div style="left:735.6px;top:155.7px;width:136px;height:3.8px;background:#6cc04a;border-radius:1.9px;"></div>
<div style="left:868.8px;top:153px;width:9px;height:9px;background:#e2e2e2;border-radius:4.5px;"></div>
<div style="left:884.2px;top:149.2px;width:49px;height:17.6px;background:#1e1e1e;border-radius:1px;"></div>
<span class="l" style="left:886.4px;top:152.73px;font-size:11px;color:#f0f0f0;letter-spacing:0.2px;">172.4 pt</span>
<svg class="t" style="left:688px;top:177px;fill:#b6b6b6" width="24" height="14"><title>線端:</title><text x="0.2" y="10.42" font-size="10.05">線端:</text></svg>
<div style="left:735.2px;top:174.2px;width:25.6px;height:18.8px;background:#1e1e1e;border-radius:3px 0 0 3px;"></div>
<div style="left:762px;top:174.2px;width:25.6px;height:18.8px;background:#464646;border-radius:0;"></div>
<div style="left:788.8px;top:174.2px;width:25.6px;height:18.8px;background:#464646;border-radius:0 3px 3px 0;"></div>
<svg style="left:735px;top:174px" width="27" height="20" viewBox="735 174 27 20"><title>Round Cap</title><path d="M739.5,178H750.2A5.25,5.25 0 0 1 750.2,188.5H739.5Z" fill="#e8e8e8"/><path d="M739.5,183.3H748.6" stroke="#242424" stroke-width="0.9"/><circle cx="748.9" cy="183.3" r="1.35" fill="#1a1a1a"/></svg>
<svg style="left:761px;top:174px" width="27" height="20" viewBox="761 174 27 20"><title>Butt Cap</title><path d="M766.6,178H778.9V188.5H766.6Z" fill="#e8e8e8"/><path d="M766.6,183.3H779.4" stroke="#3c3c3c" stroke-width="0.9"/><path d="M778.9,180.3H782.6V186.2H778.9" fill="none" stroke="#c8c8c8" stroke-width="0.7"/><circle cx="780.1" cy="183.3" r="1.35" fill="#1e1e1e"/></svg>
<svg style="left:788px;top:174px" width="27" height="20" viewBox="788 174 27 20"><title>Square Cap</title><path d="M793.3,177.6H809.8V188.5H793.3Z" fill="#e8e8e8"/><path d="M793.3,183.3H803.4" stroke="#3c3c3c" stroke-width="0.9"/><circle cx="803.7" cy="183.3" r="1.35" fill="#1e1e1e"/></svg>
<svg class="t" style="left:688px;top:203px;fill:#b6b6b6" width="24" height="13"><title>結合:</title><text x="0.2" y="9.62" font-size="10.05">結合:</text></svg>
<div style="left:735.2px;top:199.2px;width:25.6px;height:18.8px;background:#1e1e1e;border-radius:3px 0 0 3px;"></div>
<div style="left:762px;top:199.2px;width:25.6px;height:18.8px;background:#464646;border-radius:0;"></div>
<div style="left:788.8px;top:199.2px;width:25.6px;height:18.8px;background:#464646;border-radius:0 3px 3px 0;"></div>
<svg style="left:735px;top:199px" width="27" height="20" viewBox="735 199 27 20"><title>Round Join</title><path d="M745.8,202V206.6A4.4,4.4 0 0 0 750.2,211H754.4" fill="none" stroke="#9a9a9a" stroke-width="3.8"/><path d="M742.2,202V207A7.6,7.6 0 0 0 749.8,214.6H754.4" fill="none" stroke="#e8e8e8" stroke-width="1.2"/></svg>
<svg style="left:761px;top:199px" width="27" height="20" viewBox="761 199 27 20"><title>Bevel Join</title><path d="M772.5,202V207L776.4,211H781.1" fill="none" stroke="#9a9a9a" stroke-width="3.8"/><path d="M768.9,202V208.4L774.8,214.6H781.1" fill="none" stroke="#e8e8e8" stroke-width="1.2"/></svg>
<svg style="left:788px;top:199px" width="27" height="20" viewBox="788 199 27 20"><title>Mitre Join</title><path d="M799.4,202V211H807.8" fill="none" stroke="#9a9a9a" stroke-width="3.8"/><path d="M795.6,202V214.6H807.8" fill="none" stroke="#e8e8e8" stroke-width="1.2"/></svg>
<svg class="t" style="left:833px;top:203px;fill:#a4a4a4" width="44" height="13"><title>マイター:</title><text x="0.4" y="9.74" font-size="10.1">マイター:</text></svg>
<div style="left:884.2px;top:200px;width:49px;height:18px;background:#1e1e1e;border-radius:1px;"></div>
<span class="l" style="left:886.2px;top:203.72px;font-size:10.8px;color:#f0f0f0;letter-spacing:-0.3px;">1.5</span>
<svg class="t" style="left:688px;top:229px;fill:#b6b6b6" width="24" height="13"><title>整列:</title><text x="0.2" y="9.72" font-size="10.05">整列:</text></svg>
<div style="left:735.2px;top:225px;width:25.6px;height:18.8px;background:#1e1e1e;border-radius:3px 0 0 3px;"></div>
<div style="left:762px;top:225px;width:25.6px;height:18.8px;background:#464646;border-radius:0;"></div>
<div style="left:788.8px;top:225px;width:25.6px;height:18.8px;background:#464646;border-radius:0 3px 3px 0;"></div>
<svg style="left:735px;top:225px" width="27" height="19" viewBox="735 225 27 19"><title>Align Centre</title><path d="M745,240.9V231.8H754.8" fill="none" stroke="#e8e8e8" stroke-width="6.6"/><path d="M744.9,240.9V232.1H754.8" fill="none" stroke="#1e1e1e" stroke-width="0.9"/><circle cx="744.9" cy="232.1" r="1.4" fill="#161616"/></svg>
<svg style="left:761px;top:225px" width="27" height="19" viewBox="761 225 27 19"><title>Align Inside</title><path d="M767.7,228H781.3V231H770.7V240.9H767.7Z" fill="#9a9a9a"/><path d="M770.7,230.9H781.3V235H774.8V240.9H770.7Z" fill="#e8e8e8"/><circle cx="769.7" cy="229.7" r="1.3" fill="#464646" stroke="#d0d0d0" stroke-width="0.7"/></svg>
<svg style="left:788px;top:225px" width="27" height="19" viewBox="788 225 27 19"><title>Align Outside</title><path d="M800.7,233.2H808.4V236.2H803V240.9H800.7Z" fill="#9a9a9a"/><path d="M795.4,228.5H808.4V233.2H800.7V240.9H795.4Z" fill="#e8e8e8"/><circle cx="801" cy="233.7" r="1.35" fill="#1e1e1e"/></svg>
<div style="left:688.6px;top:251.2px;width:245.4px;height:1px;background:#2a2a2a;"></div>
<svg class="t" style="left:687px;top:265px;fill:#b6b6b6" width="24" height="14"><title>順序:</title><text x="1" y="10.02" font-size="10.05">順序:</text></svg>
<div style="left:735.2px;top:261.2px;width:25.6px;height:18.8px;background:#464646;border-radius:3px 0 0 3px;"></div>
<div style="left:761.1px;top:261.2px;width:25.6px;height:18.8px;background:#1e1e1e;border-radius:0 3px 3px 0;"></div>
<svg style="left:735px;top:261px" width="27" height="20" viewBox="735 261 27 20"><title>Stroke behind</title><rect x="742.2" y="265.4" width="7" height="7.6" rx="1" fill="none" stroke="#e0e0e0" stroke-width="1.2"/><rect x="745.4" y="268" width="8.2" height="8.4" rx="1" fill="#a8a8a8" stroke="#464646" stroke-width="0.8"/></svg>
<svg style="left:761px;top:261px" width="27" height="20" viewBox="761 261 27 20"><title>Stroke in front</title><rect x="772.8" y="268.6" width="7.6" height="7.6" rx="1" fill="none" stroke="#8e8e8e" stroke-width="1.1"/><rect x="768.9" y="265.1" width="8" height="7.6" rx="1" fill="#1e1e1e" stroke="#f0f0f0" stroke-width="1.6"/><rect x="771.9" y="268" width="2" height="2" fill="#f0f0f0"/></svg>
<div style="left:826.2px;top:262px;width:11px;height:10.8px;background:#222222;border-radius:2px;"></div>
<svg class="t" style="left:841px;top:264px;fill:#d4d4d4" width="101" height="10"><title>オブジェクトとともにスケーリング</title><text x="0" y="6.9" font-size="6.5">オブジェクトとともにスケーリング</text></svg>
<div style="left:688.6px;top:287px;width:245.4px;height:1px;background:#2a2a2a;"></div>
<svg class="t" style="left:688px;top:301px;fill:#b6b6b6" width="46" height="14"><title>開始位置:</title><text x="1" y="10.71" font-size="10.3">開始位置:</text></svg>
<div style="left:738px;top:297.2px;width:55px;height:21.8px;background:#464646;border-radius:2px;"></div>
<div style="left:753px;top:306.8px;width:24.2px;height:2px;background:#f0f0f0;"></div>
<svg style="left:781px;top:301px" width="9" height="13" viewBox="781 301 9 13"><path d="M782.8,305.6L785.2,303.2L787.6,305.6M782.8,310.4L785.2,312.8L787.6,310.4" fill="none" stroke="#c8c8c8" stroke-width="1"/></svg>
<div style="left:798.7px;top:299.1px;width:44.2px;height:17.7px;background:#303030;border-radius:1px;"></div>
<div style="left:845px;top:299.1px;width:11.4px;height:17.7px;background:#303030;border-radius:1px;"></div>
<span class="l" style="left:801.4px;top:302.73px;font-size:11px;color:#868686;">100 %</span>
<svg style="left:846px;top:303px" width="9" height="9" viewBox="846 303 9 9"><path d="M848.4,306.8L850.6,309.4L852.8,306.8" fill="none" stroke="#6e6e6e" stroke-width="0.9"/></svg>
<svg class="t" style="left:688px;top:331px;fill:#b6b6b6" width="46" height="14"><title>終了位置:</title><text x="1" y="9.91" font-size="10.3">終了位置:</text></svg>
<div style="left:738px;top:326px;width:55px;height:21.8px;background:#464646;border-radius:2px;"></div>
<div style="left:744.8px;top:336px;width:24.2px;height:2px;background:#f0f0f0;"></div>
<svg style="left:781px;top:331px" width="9" height="12" viewBox="781 331 9 12"><path d="M782.8,334.8L785.2,332.4L787.6,334.8M782.8,339.6L785.2,342L787.6,339.6" fill="none" stroke="#c8c8c8" stroke-width="1"/></svg>
<div style="left:798.7px;top:327.9px;width:44.2px;height:17.7px;background:#303030;border-radius:1px;"></div>
<div style="left:845px;top:327.9px;width:11.4px;height:17.7px;background:#303030;border-radius:1px;"></div>
<span class="l" style="left:801.4px;top:331.93px;font-size:11px;color:#868686;">100 %</span>
<svg style="left:846px;top:333px" width="9" height="8" viewBox="846 333 9 8"><path d="M848.4,336L850.6,338.6L852.8,336" fill="none" stroke="#6e6e6e" stroke-width="0.9"/></svg>
<svg style="left:859px;top:308px" width="13" height="27" viewBox="859 308 13 27"><title>Link</title><path d="M861.1,310.4H867.1V313.4M867.1,331V333.5H861.1" fill="none" stroke="#e0e0e0" stroke-width="1"/><rect x="864.5" y="313.6" width="5.2" height="7" rx="1.6" fill="none" stroke="#d8d8d8" stroke-width="1.1"/><rect x="864.5" y="323.8" width="5.2" height="7" rx="1.6" fill="none" stroke="#d8d8d8" stroke-width="1.1"/><path d="M867.1,318V326.4" stroke="#b8b8b8" stroke-width="1.3"/></svg>
<div style="left:879.2px;top:298.2px;width:25.6px;height:18.5px;background:#1e1e1e;border-radius:3px 0 0 3px;"></div>
<div style="left:905.4px;top:298.2px;width:25.6px;height:18.5px;background:#464646;border-radius:0 3px 3px 0;"></div>
<svg style="left:879px;top:298px" width="27" height="19" viewBox="879 298 27 19"><title>Place arrow inside</title><path d="M885.6,307.7H892" stroke="#e0e0e0" stroke-width="1.6"/><path d="M890.2,304.1L895.8,307.7L890.2,311.3Z" fill="#e0e0e0"/><path d="M897.1,301.4V314.5" stroke="#c8c8c8" stroke-width="1.3"/></svg>
<svg style="left:905px;top:298px" width="27" height="19" viewBox="905 298 27 19"><title>Place arrow outside</title><path d="M917.9,301.4V313.9" stroke="#9a9a9a" stroke-width="1.3"/><path d="M912.4,307.7H921" stroke="#e0e0e0" stroke-width="1.6"/><path d="M919.7,304L925.6,307.7L919.7,311.4Z" fill="#e0e0e0"/></svg>
<div style="left:879.2px;top:329.2px;width:24.7px;height:18.5px;background:#464646;border-radius:3px;"></div>
<div style="left:906.2px;top:329.2px;width:24.7px;height:18.5px;background:#464646;border-radius:3px;"></div>
<svg style="left:879px;top:329px" width="26" height="20" viewBox="879 329 26 20"><title>Swap</title><path d="M888,333.9H895.3A2.75,2.75 0 0 1 895.3,339.4H890.2" fill="none" stroke="#c8c8c8" stroke-width="1.4"/><path d="M893,337.4H887.9A2.8,2.8 0 0 0 887.9,343H895.4" fill="none" stroke="#c8c8c8" stroke-width="1.4"/><path d="M888.6,332L886,333.9L888.6,335.8Z" fill="#e0e0e0" stroke="#e0e0e0" stroke-width="0.5"/><path d="M894.6,341.1L897.2,343L894.6,344.9Z" fill="#e0e0e0" stroke="#e0e0e0" stroke-width="0.5"/></svg>
<svg style="left:906px;top:329px" width="26" height="20" viewBox="906 329 26 20"><title>Reset</title><path d="M912.6,337A6.1,6.1 0 0 1 923.4,335.2M924.2,340.6A6.1,6.1 0 0 1 913.4,342.4" fill="none" stroke="#c4c4c4" stroke-width="1.3"/><path d="M911,336.4L912.4,339.6L914.8,337.2Z" fill="#d4d4d4"/><path d="M925.8,341.2L924.4,338L922,340.4Z" fill="#d4d4d4"/><path d="M916.9,337.3L919.9,340.3M919.9,337.3L916.9,340.3" stroke="#d8d8d8" stroke-width="1.2"/></svg>
<div style="left:688.6px;top:360px;width:245.4px;height:1px;background:#2a2a2a;"></div>
<div style="left:691px;top:377px;width:98.8px;height:16px;background:#464646;border-radius:3px;"></div>
<svg class="t" style="left:709px;top:379px;fill:#cdcdcd" width="62" height="14"><title>プロパティ...</title><text x="1" y="10.11" font-size="10.3">プロパティ...</text></svg>
<svg class="t" style="left:848px;top:378px;fill:#b6b6b6" width="24" height="13"><title>筆圧:</title><text x="1" y="9.82" font-size="10.05">筆圧:</text></svg>
<div style="left:875px;top:375px;width:58px;height:16.8px;background:#464646;border-radius:2px;"></div>
<svg style="left:875px;top:375px" width="58" height="17" viewBox="875 375 58 17"><title>Pressure</title><path d="M877.8,382.6L930.6,388.8V390.6H877.8Z" fill="#5a5a5a"/><path d="M877.8,377.4V382.6L930.6,388.8" fill="none" stroke="#d8d8d8" stroke-width="1.1"/></svg>
</aside>
<aside id="layers-panel" aria-label="Layers panel">
<div style="left:680px;top:408.8px;width:262px;height:2.2px;background:#090909;"></div>
<div style="left:680px;top:411px;width:262px;height:28px;background:#202020;"></div>
<div style="left:698px;top:411px;width:53px;height:28px;background:#363636;"></div>
<div style="left:793.4px;top:411px;width:1.6px;height:28px;background:#2a2a2a;"></div>
<div style="left:861.4px;top:411px;width:1.6px;height:28px;background:#2a2a2a;"></div>
<div style="left:687px;top:421.4px;width:1px;height:8.2px;background:#585858;"></div>
<div style="left:690.2px;top:421.4px;width:1px;height:8.2px;background:#585858;"></div>
<svg class="t" style="left:703px;top:419px;fill:#ffffff" width="42" height="14"><title>レイヤー</title><text x="0.6" y="10.21" font-size="10.3" font-weight="500">レイヤー</text></svg>
<svg class="t" style="left:757px;top:419px;fill:#b6b6b6" width="31" height="14"><title>ブラシ</title><text x="0.4" y="10.12" font-size="10.05" font-weight="500">ブラシ</text></svg>
<svg class="t" style="left:799px;top:419px;fill:#b6b6b6" width="41" height="14"><title>クイック</title><text x="0.4" y="10.12" font-size="10.05" font-weight="500">クイック</text></svg>
<svg class="t" style="left:841px;top:419px;fill:#b6b6b6" width="13" height="14"><title>FX</title><text x="0.1" y="10.12" font-size="10.05" font-weight="500">FX</text></svg>
<svg class="t" style="left:867px;top:419px;fill:#b6b6b6" width="42" height="14"><title>スタイル</title><text x="1" y="10.12" font-size="10.05" font-weight="500">スタイル</text></svg>
<div style="left:926px;top:419.2px;width:10.4px;height:2px;background:#c2c2c2;border-radius:0.5px;"></div>
<div style="left:926px;top:423.2px;width:10.4px;height:2px;background:#c2c2c2;border-radius:0.5px;"></div>
<div style="left:926px;top:427.2px;width:10.4px;height:2px;background:#c2c2c2;border-radius:0.5px;"></div>
<div style="left:680px;top:439px;width:262px;height:32.4px;background:#363636;"></div>
<svg class="t" style="left:684px;top:450px;fill:#b6b6b6" width="46" height="14"><title>不透明度:</title><text x="1" y="10.11" font-size="10.3">不透明度:</text></svg>
<div style="left:733.2px;top:445.8px;width:41.6px;height:20px;background:#1e1e1e;border-radius:1px;"></div>
<span class="l" style="left:735.8px;top:450.63px;font-size:11px;color:#f4f4f4;">100 %</span>
<div style="left:777.2px;top:445.8px;width:10.8px;height:20px;background:#1e1e1e;border-radius:1px;"></div>
<svg style="left:778px;top:451px" width="10" height="10" viewBox="778 451 10 10"><path d="M780.2,454.6L782.5,457.2L784.8,454.6" fill="none" stroke="#b8b8b8" stroke-width="0.9"/></svg>
<div style="left:792.2px;top:445.8px;width:103.6px;height:19.4px;background:#464646;border-radius:2px;"></div>
<svg class="t" style="left:795px;top:449px;fill:#e0e0e0" width="21" height="14"><title>標準</title><text x="0.8" y="10.42" font-size="10.05">標準</text></svg>
<svg style="left:884px;top:449px" width="10" height="14" viewBox="884 449 10 14"><path d="M886.2,453.8L888.7,451.2L891.2,453.8M886.2,458.2L888.7,460.8L891.2,458.2" fill="none" stroke="#c8c8c8" stroke-width="1"/></svg>
<svg style="left:903px;top:448px" width="14" height="14" viewBox="903 448 14 14"><title>Layer options</title><path d="M914.28,453.97 L915.83,454.08 L915.83,455.92 L914.28,456.03 L913.75,457.3 L914.77,458.47 L913.47,459.77 L912.3,458.75 L911.03,459.28 L910.92,460.83 L909.08,460.83 L908.97,459.28 L907.7,458.75 L906.53,459.77 L905.23,458.47 L906.25,457.3 L905.72,456.03 L904.17,455.92 L904.17,454.08 L905.72,453.97 L906.25,452.7 L905.23,451.53 L906.53,450.23 L907.7,451.25 L908.97,450.72 L909.08,449.17 L910.92,449.17 L911.03,450.72 L912.3,451.25 L913.47,450.23 L914.77,451.53 L913.75,452.7Z" fill="#d0d0d0" stroke="#d0d0d0" stroke-width="0.8" stroke-linejoin="round"/><circle cx="910" cy="455" r="2.1" fill="#363636"/></svg>
<svg style="left:924px;top:447px" width="12" height="15" viewBox="924 447 12 15"><title>Lock</title><rect x="925.8" y="454.2" width="8.4" height="6.6" rx="0.6" fill="#a8a8a8"/><path d="M927.5,454.4V451.2A2.5,2.5 0 0 1 932.5,451.2V454.4" fill="none" stroke="#a8a8a8" stroke-width="1.1"/></svg>
<div style="left:680px;top:471.2px;width:262px;height:1.6px;background:#0e0e0e;"></div>
<div style="left:680px;top:472.8px;width:262px;height:36.1px;background:#3e6a30;"></div>
<div style="left:696.1px;top:472.8px;width:0.9px;height:36.1px;background:#1e3a18;"></div>
<div style="left:733px;top:472.8px;width:1px;height:36.1px;background:#1e3a18;"></div>
<div style="left:699.2px;top:475.2px;width:31.8px;height:31.5px;background:#262626;"></div>
<svg style="left:699px;top:475px" width="32" height="32" viewBox="699 475 32 32"><title>thumbnail</title><path d="M700.7,487.6A3.2,3.2 0 0 1 706.3,486.1Q709,489.2 712.2,490.7Q718.4,492.6 726.5,488Q720.6,494.6 713.5,495.2Q706.6,495 701.7,490.4Q700.6,489 700.7,487.6Z" fill="#fa3a1c"/></svg>
<svg style="left:682px;top:484px" width="11" height="14" viewBox="682 484 11 14"><title>Curve</title><path d="M685.4,485.6V496.4" stroke="#b4bcb0" stroke-width="1.1"/><path d="M690.6,486.4Q683.6,491 690.6,495.5" fill="none" stroke="#b4bcb0" stroke-width="1"/><circle cx="685.4" cy="491" r="1.5" fill="#3e6a30" stroke="#b4bcb0" stroke-width="0.9"/><circle cx="685.4" cy="485.8" r="0.8" fill="#b4bcb0"/><circle cx="685.4" cy="496.2" r="0.8" fill="#b4bcb0"/><circle cx="690.5" cy="486.5" r="0.7" fill="#b4bcb0"/><circle cx="690.5" cy="495.4" r="0.7" fill="#b4bcb0"/></svg>
<svg class="t" style="left:744px;top:485px;fill:#90a98a" width="29" height="13"><title>カーブ</title><text x="0.4" y="9.3" font-size="9.2">カーブ</text></svg>
<div style="left:918.3px;top:485.5px;width:8.4px;height:8.4px;background:#a8a8a8;border-radius:4.2px;"></div>
<div style="left:680px;top:508.9px;width:262px;height:35.5px;background:#1a1a1a;"></div>
<div style="left:680px;top:544.4px;width:262px;height:33.4px;background:#363636;"></div>
<div style="left:685.2px;top:551px;width:20px;height:19.8px;background:#222222;border-radius:3px;"></div>
<svg style="left:685px;top:551px" width="21" height="20" viewBox="685 551 21 20"><title>Edit all layers</title><rect x="689.6" y="555.2" width="7.4" height="7.4" rx="0.8" fill="#222" stroke="#d4d4d4" stroke-width="1"/><path d="M698.6,557.2V564.4H691.6M700.4,559.2V566.4H693.4" fill="none" stroke="#9a9a9a" stroke-width="0.9"/></svg>
<svg style="left:762px;top:553px" width="17" height="16" viewBox="762 553 17 16"><title>Mask</title><rect x="762.05" y="554.05" width="15.65" height="13.95" fill="#9c9c9c"/><circle cx="770" cy="561" r="3.9" fill="#2e2e2e"/></svg>
<svg style="left:784px;top:552px" width="18" height="18" viewBox="784 552 18 18"><title>Adjustments</title><circle cx="792.9" cy="561" r="7.6" fill="none" stroke="#a0a0a0" stroke-width="0.95"/><path d="M796.7,557.3A5.3,5.3 0 0 1 789.2,564.8Z" fill="#a0a0a0"/></svg>
<svg style="left:807px;top:552px" width="15" height="18" viewBox="807 552 15 18"><title>Layer FX</title><path d="M808,553.5H820M808,568.6H820" stroke="#c4c4c4" stroke-width="0.85"/><path d="M809,565.8V557H813.1M809,560.9H812.3" fill="none" stroke="#cfcfcf" stroke-width="1.6"/><path d="M814.1,557L819.5,565.8M819.5,557L814.1,565.8" stroke="#cfcfcf" stroke-width="1.65"/></svg>
<svg style="left:827px;top:553px" width="17" height="17" viewBox="827 553 17 17"><title>Live filters</title><path d="M832.9,553.9Q836.4,553 839.4,553.9Q843.4,560.6 842.8,567.2Q835.6,569.2 828.4,567.6Q829.4,560.6 832.9,553.9Z" fill="none" stroke="#b0b0b0" stroke-width="0.95"/><path d="M835,553.5Q833.8,561 833,568.3M837.4,553.5Q838.8,561 838.4,568.2M831,557.8Q836.2,559 841.2,557.8M829.4,562.8Q836,564.4 843,562.8" fill="none" stroke="#b0b0b0" stroke-width="0.9"/><path d="M833.2,554Q831.6,557 831,557.8Q833,558.4 834.4,558.4Q834.6,556 835,553.6Z" fill="#8e8e8e"/><path d="M838.7,562.2Q841,562 842.9,561.6L842.8,567.2Q840.6,567.8 838.4,568.1Z" fill="#8e8e8e" opacity="0.7"/></svg>
<svg style="left:878px;top:552px" width="16" height="18" viewBox="878 552 16 18"><title>Add layer</title><path d="M886.9,553.5H880.5A1,1 0 0 0 879.5,554.5V567.2A1,1 0 0 0 880.5,568.2H889.5A1,1 0 0 0 890.5,567.2V559.7" fill="none" stroke="#adadad" stroke-width="0.95"/><path d="M882,559H888M882,561.95H888M882,565.05H888" stroke="#adadad" stroke-width="1.45"/><path d="M888.3,555.5H892.9M890.6,553.2V557.8" stroke="#d0d0d0" stroke-width="0.95"/></svg>
<svg style="left:901px;top:552px" width="14" height="18" viewBox="901 552 14 18"><title>Add pixel layer</title><rect x="902.55" y="553.5" width="11" height="14.7" rx="0.9" fill="none" stroke="#adadad" stroke-width="0.95"/><rect x="905.05" y="556" width="1.9" height="1.9" fill="#b4b4b4"/><rect x="905.05" y="560.1" width="1.9" height="1.9" fill="#b4b4b4"/><rect x="905.05" y="564.2" width="1.9" height="1.9" fill="#b4b4b4"/><rect x="907.1" y="558.05" width="1.9" height="1.9" fill="#b4b4b4"/><rect x="907.1" y="562.15" width="1.9" height="1.9" fill="#b4b4b4"/><rect x="909.15" y="556" width="1.9" height="1.9" fill="#b4b4b4"/><rect x="909.15" y="560.1" width="1.9" height="1.9" fill="#b4b4b4"/><rect x="909.15" y="564.2" width="1.9" height="1.9" fill="#b4b4b4"/></svg>
<svg style="left:924px;top:552px" width="14" height="18" viewBox="924 552 14 18"><title>Delete layer</title><path d="M925.3,556.9V556.2A0.6,0.6 0 0 1 925.9,555.6H936.2A0.6,0.6 0 0 1 936.8,556.2V556.9M928.6,555.4V554.3A0.9,0.9 0 0 1 929.5,553.4H932.7A0.9,0.9 0 0 1 933.6,554.3V555.4" fill="none" stroke="#adadad" stroke-width="0.95"/><path d="M926.5,557.2V567.1A1.1,1.1 0 0 0 927.6,568.2H934.5A1.1,1.1 0 0 0 935.6,567.1V557.2" fill="none" stroke="#adadad" stroke-width="0.95"/><path d="M929.3,558V566M932.7,558V566" stroke="#adadad" stroke-width="0.95"/></svg>
<div style="left:680px;top:577.8px;width:262px;height:2.2px;background:#0e0e0e;"></div>
<div style="left:680px;top:580px;width:262px;height:28.2px;background:#202020;"></div>
<div style="left:698px;top:580px;width:33px;height:28.2px;background:#363636;"></div>
<div style="left:793.4px;top:580px;width:1.6px;height:28.2px;background:#2a2a2a;"></div>
<div style="left:687px;top:590px;width:1px;height:8.2px;background:#585858;"></div>
<div style="left:690.2px;top:590px;width:1px;height:8.2px;background:#585858;"></div>
<svg class="t" style="left:703px;top:588px;fill:#ffffff" width="21" height="14"><title>変形</title><text x="0.8" y="10.12" font-size="10.05" font-weight="500">変形</text></svg>
<svg class="t" style="left:736px;top:588px;fill:#b6b6b6" width="52" height="14"><title>ナビゲータ</title><text x="1" y="10.12" font-size="10.05" font-weight="500">ナビゲータ</text></svg>
<svg class="t" style="left:799px;top:588px;fill:#b6b6b6" width="22" height="14"><title>履歴</title><text x="1" y="10.12" font-size="10.05" font-weight="500">履歴</text></svg>
<div style="left:926px;top:588.2px;width:10.4px;height:2px;background:#c2c2c2;border-radius:0.5px;"></div>
<div style="left:926px;top:592.2px;width:10.4px;height:2px;background:#c2c2c2;border-radius:0.5px;"></div>
<div style="left:926px;top:596.2px;width:10.4px;height:2px;background:#c2c2c2;border-radius:0.5px;"></div>
</aside>
<footer id="status-bar" aria-label="Status bar">
<div style="left:0px;top:608px;width:942px;height:20px;background:#363636;"></div>
<div style="left:0px;top:609px;width:942px;height:1px;background:#3a3a3a;"></div>
<div style="left:0px;top:608px;width:942px;height:1px;background:#0e0e0e;"></div>
<svg class="t" style="left:19px;top:613px;fill:#c4c4c4" width="42" height="14"><title>カーブを</title><text x="0.9" y="10.07" font-size="10.18">カーブを</text></svg>
<svg class="t" style="left:60px;top:613px;fill:#ffffff" width="42" height="14"><title>クリック</title><text x="0.6" y="10.07" font-size="10.18" font-weight="bold">クリック</text></svg>
<svg class="t" style="left:101px;top:613px;fill:#c4c4c4" width="31" height="14"><title>または</title><text x="0.3" y="10.07" font-size="10.18">または</text></svg>
<svg class="t" style="left:131px;top:613px;fill:#ffffff" width="42" height="14"><title>ドラッグ</title><text x="0.9" y="10.07" font-size="10.18" font-weight="bold">ドラッグ</text></svg>
<svg class="t" style="left:172px;top:613px;fill:#c4c4c4" width="205" height="14"><title>して、そのカーブの境界線幅を変更します。</title><text x="0.6" y="10.07" font-size="10.18">して、そのカーブの境界線幅を変更します。</text></svg>
</footer>
</body></html>
